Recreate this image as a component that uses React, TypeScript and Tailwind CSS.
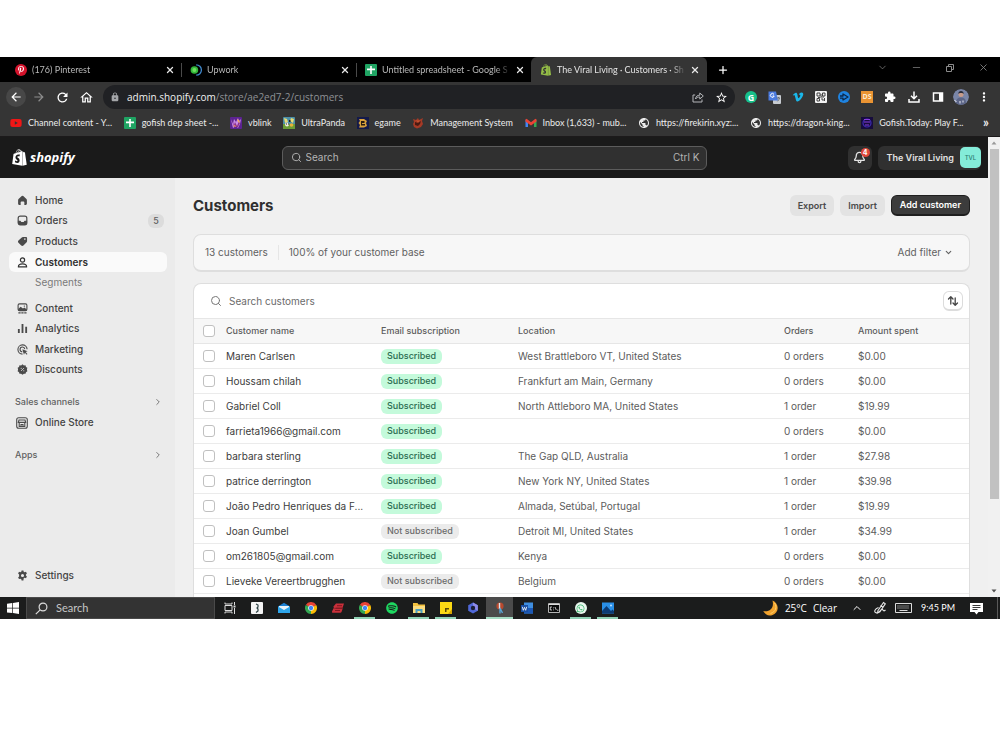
import React from "react";
import type { ReactNode } from "react";
import { FaShopify, FaPinterestP, FaVimeoV, FaSpotify, FaWhatsapp, FaYoutube } from "react-icons/fa";
import {
  MdArrowBack,
  MdArrowForward,
  MdRefresh,
  MdOutlineHome,
  MdLock,
  MdStarBorder,
  MdExtension,
  MdMoreVert,
  MdPublic,
} from "react-icons/md";
import { X, Plus, Minus, ChevronDown, ChevronRight, ChevronUp, Search } from "lucide-react";

/* ---------- small drawings ---------- */

function SheetsIcon() {
  return (
    <svg viewBox="0 0 12 12" className="size-3 shrink-0">
      <rect width="12" height="12" rx="1" fill="#1fa463" />
      <path d="M5.2 2h1.6v2.6H10v1.6H6.8V10H5.2V6.2H2V4.6h3.2z" fill="#fff" />
    </svg>
  );
}

function UpworkIcon() {
  return (
    <svg viewBox="0 0 12 12" className="size-3 shrink-0">
      <path d="M6.2.8a5.2 5.2 0 0 1 0 10.4" fill="none" stroke="#3f86c9" strokeWidth="1.3" />
      <circle cx="4.4" cy="6" r="3.800" fill="#33b83a" />
      <circle cx="4.4" cy="6" r="2" fill="#6fe060" />
    </svg>
  );
}

function ChromeIcon() {
  return (
    <svg viewBox="0 0 24 24" className="size-3 shrink-0">
      <path d="M12 12 1.6 6A12 12 0 0 1 22.4 6z" fill="#ea4335" />
      <path d="M12 12 22.4 6A12 12 0 0 1 12 24z" fill="#fbbc05" />
      <path d="M12 12v12A12 12 0 0 1 1.6 6z" fill="#34a853" />
      <circle cx="12" cy="12" r="5.6" fill="#fff" />
      <circle cx="12" cy="12" r="4.4" fill="#4285f4" />
    </svg>
  );
}

function VblinkIcon() {
  return (
    <svg viewBox="0 0 12 12" className="size-3 shrink-0">
      <rect width="12" height="12" rx="1" fill="#5c2391" />
      <path d="M1 2l2 5 1-5 2 3 2-4 1 3 2-2-1 5-2 4-2-2-3 2-1-4z" fill="#c98ae8" />
      <path d="M2 3l2 5 1-3 2 4 2-5 1 2-2 4H4z" fill="#8e2f86" />
      <path d="M7 2l2 1 1 3-2-1zM3 9l2-1 1 2z" fill="#f0a35c" />
    </svg>
  );
}

function PandaIcon() {
  return (
    <svg viewBox="0 0 12 12" className="size-3 shrink-0">
      <rect width="12" height="12" rx="1" fill="#4b8fa8" />
      <path d="M0 7h12v5H0z" fill="#6a9c35" />
      <path d="M1 1l3 1 1 3-3 1zM8 1l3 1-1 4-3-2z" fill="#e9dc72" />
      <circle cx="4" cy="7.500" r="2" fill="#f1efe2" />
      <circle cx="8.500" cy="8" r="1.800" fill="#e6b13c" />
      <path d="M3 6.500h1v1H3zM5 6.500h1v1H5zM6 3h1.500v2H6z" fill="#222" />
    </svg>
  );
}

function EgameIcon() {
  return (
    <svg viewBox="0 0 12 12" className="size-3 shrink-0">
      <rect width="12" height="12" fill="#141a4a" />
      <path d="M2 2h5l3 2-1 2 1 3-3 1.5H2L3 8 1.5 6 3 4z" fill="#d9a13c" />
      <path d="M4 4h3l1 1-1 1H5v1h3v1.5H4z" fill="#2a1d12" />
    </svg>
  );
}

function DragonIcon() {
  return (
    <svg viewBox="0 0 12 12" className="size-3 shrink-0">
      <path d="M1 2l3 1 2-2 1 2 4-2-1 3 1 3-2 3-4 1.5L2 10 1 7l1-2z" fill="#a63a26" />
      <path d="M3 5l3 1 3-2-1 3-2 2-3-1z" fill="#4a1a12" />
      <path d="M4 3l2 1 2-1-2 2z" fill="#d8703c" />
    </svg>
  );
}

function GmailIcon() {
  return (
    <svg viewBox="0 0 12 12" className="size-3 shrink-0">
      <path d="M.5 2.5V10H3V4.6z" fill="#4285f4" />
      <path d="M11.500 2.500V10H9V4.600z" fill="#34a853" />
      <path d="M.5 2.500 1.600 1.800 6 5.200l4.400-3.400 1.100.7v2L6 8.400.5 4.500z" fill="#ea4335" />
    </svg>
  );
}

function GofishIcon() {
  return (
    <svg viewBox="0 0 12 12" className="size-3 shrink-0">
      <rect width="12" height="12" fill="#170c3d" />
      <circle cx="6" cy="6" r="4" fill="none" stroke="#3d2bb0" strokeWidth="1.200" />
      <path d="M3 5h6M4 8h4M3 2.500h6" stroke="#8a3de0" strokeWidth="1" />
    </svg>
  );
}

function ShareIcon() {
  return (
    <svg viewBox="0 0 12 12" className="size-3" fill="none" stroke="#b4b6b9" strokeWidth="1">
      <path d="M3.200 4H1v7h9V8.500" />
      <path d="M3.500 8c.3-2.600 1.800-3.800 4.300-3.800V2L11.300 5 7.800 8V6c-2 0-3.300.5-4.300 2z" strokeLinejoin="round" />
    </svg>
  );
}

function TranslateIcon() {
  return (
    <svg viewBox="0 0 13 13" className="size-[13px]">
      <rect x="5" y="4" width="8" height="9" rx="1" fill="#c7cbd1" />
      <path d="M.5.5H8l2 9H.5z" fill="#4b7be0" />
      <path d="M6 3.400A1.900 1.900 0 1 0 6.200 5H4.600" fill="none" stroke="#fff" />
      <path d="M8.500 7h3.500M10.500 6v1M11.500 7c-.3 1.500-1 2.500-2 3.300" stroke="#59616b" strokeWidth=".8" fill="none" />
    </svg>
  );
}

function QrIcon() {
  return (
    <svg viewBox="0 0 12 12" className="size-3">
      <rect width="12" height="12" rx="1" fill="#f2f2f2" />
      <path d="M2 2h3v3H2zM7.500 2H10v3H7.500zM2 7.500h2.500V10H2z" fill="none" stroke="#333" strokeWidth=".9" />
      <path d="M6 3v3h3M6 8h2v2M9.500 7v3M5.500 6.500H3" stroke="#333" strokeWidth=".9" fill="none" />
    </svg>
  );
}

function PlayBadge() {
  return (
    <svg viewBox="0 0 12 12" className="size-3">
      <circle cx="6" cy="6" r="6" fill="#1f83e0" />
      <path d="M2 5h3V3l5 3-5 3V7.200H2" fill="none" stroke="#0c2748" strokeWidth="1.300" strokeLinejoin="round" />
    </svg>
  );
}

function NavIcon({ name }: { name: string }) {
  const c = "#4a4a4a";
  const art: Record<string, ReactNode> = {
    home: <path d="M5.200 1.200a1.200 1.200 0 0 1 1.600 0l3.500 3.200c.3.300.5.700.5 1.200v4c0 .8-.6 1.200-1.200 1.200H8V8a1 1 0 0 0-1-1H5a1 1 0 0 0-1 1v2.800H2.400c-.7 0-1.200-.5-1.200-1.200v-4c0-.5.2-.9.5-1.200z" fill={c} />,
    orders: (
      <>
        <rect x="1.300" y="1.300" width="9.400" height="9.400" rx="2.200" fill="none" stroke={c} strokeWidth="1.300" />
        <path d="M1 6.300h2.600c.5 0 .7 1.300 1.200 1.300h2.400c.5 0 .7-1.300 1.200-1.300H11v2.200c0 1.400-.9 2.300-2.300 2.300H3.300C1.900 10.800 1 9.900 1 8.500z" fill={c} />
      </>
    ),
    products: (
      <path
        fillRule="evenodd"
        d="M6.500 1h3.200c.8 0 1.300.5 1.300 1.300v3.200c0 .5-.2 1-.5 1.300l-3.500 3.500c-.7.7-1.700.7-2.400 0L1.600 7.300c-.7-.7-.7-1.700 0-2.400l3.600-3.400c.3-.3.800-.5 1.300-.5zM8.600 2.500a.9.900 0 1 0 0 1.800.9.900 0 0 0 0-1.800z"
        fill={c}
      />
    ),
    customers: (
      <g fill="none" stroke="#333" strokeWidth="1.300">
        <circle cx="6" cy="3.300" r="2.300" />
        <path d="M1.500 10.800c0-1.900 1.500-3.200 4.500-3.200s4.500 1.300 4.500 3.200z" strokeLinejoin="round" />
      </g>
    ),
    content: (
      <>
        <rect x="1.200" y="1" width="9.600" height="7.300" rx="1.500" fill="none" stroke={c} strokeWidth="1.200" />
        <path d="M1.300 6.500 4 4l2.500 2L8 5l2.700 2v1.500H1.300z" fill={c} />
        <circle cx="8" cy="3.400" r=".8" fill={c} />
        <path d="M1.500 10.800h9" stroke={c} strokeWidth="1.200" strokeDasharray="2.500 .7" />
      </>
    ),
    analytics: <path d="M1 6.500h2v4.500H1zM5 1h2v10H5zM9 4h2v7H9z" fill={c} />,
    marketing: (
      <g fill="none" stroke={c} strokeWidth="1.200">
        <path d="M11 5.800A5 5 0 1 0 6 11" />
        <path d="M8.500 5.600A2.600 2.600 0 1 0 5.800 8.500" />
        <path d="M5.800 5.800l5.800 2-2.200 1 2 2-.8.800-2-2-1 2z" fill={c} stroke="none" />
      </g>
    ),
    discounts: (
      <>
        <path d="M6 .4l1.500 1.100 1.800-.1.500 1.800 1.500 1L10.800 6l.5 1.900-1.500 1-.5 1.800-1.800-.1L6 11.600l-1.500-1-1.800.1-.5-1.800-1.500-1L1.200 6 .7 4.200l1.500-1 .5-1.800 1.800.1z" fill={c} />
        <path d="M4.400 7.600l3.200-3.200" stroke="#eee" strokeWidth=".8" />
        <circle cx="4.600" cy="4.700" r=".6" fill="#eee" />
        <circle cx="7.400" cy="7.300" r=".6" fill="#eee" />
      </>
    ),
    store: (
      <g fill="none" stroke={c} strokeWidth="1.100">
        <rect x=".7" y=".7" width="10.600" height="10.600" rx="2" />
        <path d="M3 3h6l.7 2.400H2.300zM3.200 6v3.500h5.600V6M5 9.500V7.500h2v2" />
      </g>
    ),
    settings: (
      <path
        fillRule="evenodd"
        d="M5 .5h2l.3 1.500 1 .5 1.500-.5 1 1.800-1.100 1v1.300l1.100 1-1 1.800-1.500-.4-1 .5L7 11.500H5L4.700 10l-1-.5-1.500.4-1-1.800 1.100-1V5.800v-1l-1.100-1 1-1.800 1.500.5 1-.5zM6 4.300a1.700 1.700 0 1 0 0 3.400 1.700 1.700 0 0 0 0-3.400z"
        fill={c}
      />
    ),
  };
  return (
    <svg viewBox="0 0 12 12" className={name === "store" ? "size-3 shrink-0" : "size-[11px] shrink-0"}>
      {art[name]}
    </svg>
  );
}

/* ---------- browser chrome ---------- */

function Tab({ icon, title, active }: { icon: ReactNode; title: string; active?: boolean }) {
  return (
    <div
      className={
        active
          ? "flex h-full w-[176px] items-center rounded-t-md bg-[#353535] pr-[7px] pl-[9px] text-[#e4e4e4]"
          : "flex h-full w-[175px] items-center pr-[6px] pl-[9px] text-[#b9b9b9]"
      }
    >
      {icon}
      <span className="ml-[5px] min-w-0 flex-1 overflow-hidden whitespace-nowrap [mask-image:linear-gradient(to_right,#000_88%,transparent)]">
        {title}
      </span>
      <button aria-label="Close tab" className="ml-1 grid size-[10px] place-items-center text-[#e8e8e8]">
        <X className="size-[10px]" strokeWidth={3} />
      </button>
    </div>
  );
}

function TabStrip() {
  return (
    <div className="flex h-[25px] items-center bg-black pl-[6px] font-[Lato,sans-serif] text-[9px]">
      <Tab
        icon={
          <span className="grid size-3 shrink-0 place-items-center rounded-full bg-[#d3122b]">
            <FaPinterestP className="size-2 text-white" />
          </span>
        }
        title="(176) Pinterest"
      />
      <div className="-mr-px h-[14px] w-px bg-[#4a4a4a]" />
      <Tab icon={<UpworkIcon />} title="Upwork" />
      <div className="-mr-px h-[14px] w-px bg-[#4a4a4a]" />
      <Tab icon={<SheetsIcon />} title="Untitled spreadsheet - Google S" />
      <Tab active icon={<FaShopify className="size-3 shrink-0 text-[#95bf47]" />} title="The Viral Living · Customers · Sh" />
      <button aria-label="New tab" className="ml-[10px] text-white">
        <Plus className="size-3" strokeWidth={2.5} />
      </button>
      <div className="ml-auto flex items-center gap-[23px] pr-[11px] pb-1 text-[#8c8c8c]">
        <button aria-label="Search tabs"><ChevronDown className="size-[11px]" strokeWidth={1.5} /></button>
        <button aria-label="Minimize"><Minus className="size-[11px]" strokeWidth={1.5} /></button>
        <button aria-label="Restore">
          <svg viewBox="0 0 10 10" className="size-[10px]" fill="none" stroke="currentColor">
            <path d="M1.500 3.500h5v5h-5zM3.500 3.500v-2h5v5h-2" />
          </svg>
        </button>
        <button aria-label="Close"><X className="size-[11px]" strokeWidth={1.8} /></button>
      </div>
    </div>
  );
}

function Toolbar() {
  return (
    <div className="flex h-[30px] items-center bg-[#353535] pr-[10px] pl-[6px] text-white">
      <button aria-label="Back" className="grid size-5 place-items-center rounded-full bg-[#474747]">
        <MdArrowBack className="size-[14px]" />
      </button>
      <button aria-label="Forward" className="ml-[6px] text-[#8d8d8d]"><MdArrowForward className="size-[14px]" /></button>
      <button aria-label="Reload" className="ml-[9px]"><MdRefresh className="size-[15px]" /></button>
      <button aria-label="Home" className="ml-[9px]"><MdOutlineHome className="size-[15px]" /></button>
      <div className="ml-[9px] flex h-6 min-w-0 flex-1 items-center rounded-full bg-[#202124] pr-[7px] pl-[7px]">
        <MdLock className="size-[10px] shrink-0 text-[#a4a6a9]" />
        <a href="#store" className="ml-[7px] flex-1 text-[10px] text-[#8f9194]">
          <span className="text-[#f1f1f1]">admin.shopify.com</span>/store/ae2ed7-2/customers
        </a>
        <button aria-label="Share"><ShareIcon /></button>
        <button aria-label="Bookmark" className="ml-[11px]"><MdStarBorder className="size-[13px]" /></button>
      </div>
      <div className="ml-[10px] flex items-center gap-[11px]">
        <span className="grid size-3 place-items-center rounded-full bg-[#17c08a] text-[9px] font-bold">G</span>
        <TranslateIcon />
        <FaVimeoV className="size-3 text-[#1ab7ea]" />
        <QrIcon />
        <PlayBadge />
        <span className="grid size-3 place-items-center bg-[#ea9433] text-[7px] font-bold text-[#fbe8cf]">DS</span>
        <MdExtension className="size-3" />
        <svg viewBox="0 0 12 12" className="mx-px size-3" fill="none" stroke="#fff" strokeWidth="1.500">
          <path d="M6 .5v7M3 4.800l3 3 3-3M1 8v3h10V8" />
        </svg>
        <svg viewBox="0 0 12 12" className="size-3">
          <path d="M1.500 2h9v8h-9z" fill="none" stroke="#fff" strokeWidth="1.500" />
          <path d="M7 2h4v8H7z" fill="#fff" />
        </svg>
        <svg viewBox="0 0 16 16" className="-mx-[2px] size-4 rounded-full">
          <circle cx="8" cy="8" r="8" fill="#7a86a8" />
          <circle cx="8" cy="5.500" r="2.500" fill="#c79c8b" />
          <path d="M5.200 5c0-4 5.600-4 5.600 0-1-1.200-4.600-1.200-5.600 0z" fill="#2b2d3a" />
          <path d="M3 14c0-4 2-5.500 5-5.500s5 1.500 5 5.500c-3 2.500-7 2.500-10 0z" fill="#5d6688" />
          <path d="M1.500 11.500l2 1M7 12v2.500M10 11.500v2" stroke="#e7e9f2" fill="none" />
        </svg>
        <button aria-label="Menu"><MdMoreVert className="-mx-[1px] size-[14px]" /></button>
      </div>
    </div>
  );
}

const bookmarks: { icon: ReactNode; label: string }[] = [
  { icon: <FaYoutube className="size-3 shrink-0 text-[#f01616]" />, label: "Channel content - Y..." },
  { icon: <SheetsIcon />, label: "gofish dep sheet -..." },
  { icon: <VblinkIcon />, label: "vblink" },
  { icon: <PandaIcon />, label: "UltraPanda" },
  { icon: <EgameIcon />, label: "egame" },
  { icon: <DragonIcon />, label: "Management System" },
  { icon: <GmailIcon />, label: "Inbox (1,633) - mub..." },
  { icon: <MdPublic className="size-3 shrink-0" />, label: "https://firekirin.xyz:..." },
  { icon: <MdPublic className="size-3 shrink-0" />, label: "https://dragon-king..." },
  { icon: <GofishIcon />, label: "Gofish.Today: Play F..." },
];

function Bookmarks() {
  return (
    <div className="flex h-[25px] items-center justify-between border-b border-[#1c1a1b] bg-[#353535] pr-[11px] pb-[3px] pl-[10px] font-[Lato,sans-serif] text-[9px] text-[#ececec]">
      {bookmarks.map((b) => (
        <a key={b.label} href="#bookmark" className="flex items-center gap-[6px] whitespace-nowrap">
          {b.icon}
          {b.label}
        </a>
      ))}
      <button aria-label="More bookmarks" className="ml-2 text-[13px] leading-none font-bold">»</button>
    </div>
  );
}

/* ---------- store admin ---------- */

function AdminHeader() {
  return (
    <header className="grid h-[41px] shrink-0 grid-cols-[1fr_425px_1fr] items-center bg-[#1a1a1a] px-[7px] text-[#e3e3e3]">
      <a href="#home" aria-label="Shopify" className="flex items-center gap-[2px] pl-1 text-white">
        <FaShopify className="size-[17px]" />
        <span className="font-['Open_Sans',sans-serif] text-[13px] leading-none font-bold italic">shopify</span>
      </a>
      <label className="flex h-6 items-center rounded-md border border-[#5c5c5c] bg-[#303030] px-[6px] text-[10px] text-[#b5b5b5]">
        <Search className="ml-[2px] size-[11px]" strokeWidth={2} />
        <input aria-label="Search" placeholder="Search" className="ml-[4px] min-w-0 flex-1 bg-transparent outline-none placeholder:text-[#b5b5b5]" />
        <span>Ctrl K</span>
      </label>
      <div className="flex items-center justify-end gap-[6px]">
        <button aria-label="Notifications" className="relative grid size-6 place-items-center rounded-md bg-[#303030]">
          <svg viewBox="0 0 12 12" className="size-[13px]" fill="none" stroke="#e3e3e3" strokeWidth="1.200">
            <path d="M6 1.200c-2 0-3 1.500-3 3.300 0 1.700-.7 2.400-1.400 3.300-.3.500 0 .9.500.9h7.800c.5 0 .8-.4.5-.9C9.700 6.900 9 6.200 9 4.500 9 2.700 8 1.200 6 1.200z" />
            <path d="M4.700 9c0 2.400 2.600 2.400 2.600 0" />
          </svg>
          <span className="absolute top-[2px] right-[2px] grid size-[9px] place-items-center rounded-full bg-[#e0483a] text-[7px] leading-none font-bold text-white">4</span>
        </button>
        <button className="flex h-6 items-center gap-[6px] rounded-md bg-[#303030] pl-[9px] text-[9px] font-semibold">
          The Viral Living
          <span className="grid size-[21px] place-items-center rounded-[5px] bg-[#84ecd9] text-[6px] font-medium text-[#2c7d72]">TVL</span>
        </button>
      </div>
    </header>
  );
}

function NavItem({ icon, label, active, badge }: { icon?: string; label: string; active?: boolean; badge?: string }) {
  return (
    <a
      href={"#" + label.toLowerCase().replace(" ", "-")}
      className={
        active
          ? "flex flex-1 items-center gap-[7px] rounded-md bg-[#fafafa] px-[7px] font-semibold text-[#303030]"
          : icon
            ? "flex flex-1 items-center gap-[7px] px-[7px] font-medium text-[#444]"
            : "flex flex-1 items-center pl-[26px] text-[#7a7a7a]"
      }
    >
      {icon && <span className="grid w-3 place-items-center"><NavIcon name={icon} /></span>}
      {label}
      {badge && (
        <span className="-mr-1 ml-auto grid h-[14px] w-4 place-items-center rounded-md bg-[#dcdcdc] text-[9px] text-[#616161]">
          {badge}
        </span>
      )}
    </a>
  );
}

function SectionButton({ label }: { label: string }) {
  return (
    <button className="flex h-5 w-full items-center justify-between pr-1 pl-[6px] text-[9px] font-medium text-[#616161]">
      {label}
      <ChevronRight className="size-[10px]" strokeWidth={2} />
    </button>
  );
}

function Sidebar() {
  return (
    <nav className="flex w-[175px] shrink-0 flex-col bg-[#ebebeb] pt-3 pr-2 pb-3 pl-[9px] text-[10px]">
      <div className="flex h-[103px] flex-col">
        <NavItem icon="home" label="Home" />
        <NavItem icon="orders" label="Orders" badge="5" />
        <NavItem icon="products" label="Products" />
        <NavItem icon="customers" label="Customers" active />
        <NavItem label="Segments" />
      </div>
      <div className="mt-[5px] flex h-[82px] flex-col">
        <NavItem icon="content" label="Content" />
        <NavItem icon="analytics" label="Analytics" />
        <NavItem icon="marketing" label="Marketing" />
        <NavItem icon="discounts" label="Discounts" />
      </div>
      <div className="mt-3 flex h-[41px] flex-col">
        <SectionButton label="Sales channels" />
        <NavItem icon="store" label="Online Store" />
      </div>
      <div className="mt-3">
        <SectionButton label="Apps" />
      </div>
      <div className="mt-auto flex h-5">
        <NavItem icon="settings" label="Settings" />
      </div>
    </nav>
  );
}

type Customer = { name: string; subscribed: boolean; location: string; orders: string; spent: string };

const customers: Customer[] = [
  { name: "Maren Carlsen", subscribed: true, location: "West Brattleboro VT, United States", orders: "0 orders", spent: "$0.00" },
  { name: "Houssam chilah", subscribed: true, location: "Frankfurt am Main, Germany", orders: "0 orders", spent: "$0.00" },
  { name: "Gabriel Coll", subscribed: true, location: "North Attleboro MA, United States", orders: "1 order", spent: "$19.99" },
  { name: "farrieta1966@gmail.com", subscribed: true, location: "", orders: "0 orders", spent: "$0.00" },
  { name: "barbara sterling", subscribed: true, location: "The Gap QLD, Australia", orders: "1 order", spent: "$27.98" },
  { name: "patrice derrington", subscribed: true, location: "New York NY, United States", orders: "1 order", spent: "$39.98" },
  { name: "João Pedro Henriques da F...", subscribed: true, location: "Almada, Setúbal, Portugal", orders: "1 order", spent: "$19.99" },
  { name: "Joan Gumbel", subscribed: false, location: "Detroit MI, United States", orders: "1 order", spent: "$34.99" },
  { name: "om261805@gmail.com", subscribed: true, location: "Kenya", orders: "0 orders", spent: "$0.00" },
  { name: "Lieveke Vereertbrugghen", subscribed: false, location: "Belgium", orders: "0 orders", spent: "$0.00" },
];

function Tick({ label }: { label: string }) {
  return (
    <input
      type="checkbox"
      aria-label={label}
      className="ml-[9px] block size-3 appearance-none rounded-[3px] border border-[#c0c0c0] bg-white checked:bg-[#303030]"
    />
  );
}

function CustomerTable() {
  return (
    <table className="w-full table-fixed border-collapse text-left text-[9px] text-[#5c5c5c]">
      <colgroup>
        <col className="w-8" />
        <col className="w-[155px]" />
        <col className="w-[137px]" />
        <col />
        <col className="w-[74px]" />
        <col className="w-[111px]" />
      </colgroup>
      <thead>
        <tr className="h-[25px] border-y border-[#e6e6e6] bg-[#f7f7f7]">
          <th><Tick label="Select all customers" /></th>
          <th className="font-medium">Customer name</th>
          <th className="font-medium">Email subscription</th>
          <th className="font-medium">Location</th>
          <th className="font-medium">Orders</th>
          <th className="font-medium">Amount spent</th>
        </tr>
      </thead>
      <tbody className="text-[10px]">
        {customers.map((c) => (
          <tr key={c.name} className="h-[25px] border-b border-[#ebebeb]">
            <td><Tick label={"Select " + c.name} /></td>
            <td className="whitespace-nowrap text-[#3c3c3c]">{c.name}</td>
            <td>
              <span
                className={
                  c.subscribed
                    ? "flex h-[15px] w-fit items-center rounded-md bg-[#c4fadb] px-[6px] text-[9px] font-medium text-[#2a6b50]"
                    : "flex h-[15px] w-fit items-center rounded-md bg-[#ebebeb] px-[6px] text-[9px] font-medium text-[#6b6b6b]"
                }
              >
                {c.subscribed ? "Subscribed" : "Not subscribed"}
              </span>
            </td>
            <td>{c.location}</td>
            <td>{c.orders}</td>
            <td>{c.spent}</td>
          </tr>
        ))}
      </tbody>
    </table>
  );
}

function CustomersPage() {
  return (
    <main className="flex min-w-0 flex-1 flex-col overflow-hidden bg-[#f0f0f0] px-[18px] pt-[17px]">
      <div className="flex h-[21px] shrink-0 items-center gap-[6px] text-[9px] font-semibold text-[#4a4a4a]">
        <h1 className="mr-auto pt-[2px] text-[15px] font-bold text-[#2f2f2f]">Customers</h1>
        <button className="h-[21px] rounded-md bg-[#e3e3e3] px-2">Export</button>
        <button className="h-[21px] rounded-md bg-[#e3e3e3] px-2">Import</button>
        <button className="h-[21px] rounded-md border border-b-2 border-[#1f1f1f] bg-[#3c3c3c] px-2 text-white">
          Add customer
        </button>
      </div>
      <section className="mt-[18px] flex h-[38px] shrink-0 items-center rounded-lg border border-b-2 border-[#dedede] bg-[#f7f7f7] px-[11px] text-[10px] text-[#616161]">
        <span>13 customers</span>
        <span className="ml-[10px] border-l border-[#e6e6e6] pl-[10px]">100% of your customer base</span>
        <button className="mr-[5px] ml-auto flex items-center gap-[3px]">
          Add filter
          <ChevronDown className="size-[9px]" strokeWidth={3} />
        </button>
      </section>
      <section className="mt-[11px] flex-1 rounded-t-lg border border-b-0 border-[#dedede] bg-white">
        <div className="flex h-[34px] items-center pr-[6px] pl-[16px] text-[10px]">
          <Search className="size-3 text-[#777]" strokeWidth={2} />
          <input
            aria-label="Search customers"
            placeholder="Search customers"
            className="ml-[7px] min-w-0 flex-1 bg-transparent outline-none placeholder:text-[#6b6b6b]"
          />
          <button aria-label="Sort" className="grid size-5 place-items-center rounded-md border border-b-2 border-[#dcdcdc] bg-white">
            <svg viewBox="0 0 12 12" className="size-3" fill="none" stroke="#444" strokeWidth="1.300" strokeLinecap="round" strokeLinejoin="round">
              <path d="M3.800 9V2M1.500 4 3.800 1.700 6 4M8.200 3v7M6 8l2.200 2.300L10.500 8" />
            </svg>
          </button>
        </div>
        <CustomerTable />
      </section>
    </main>
  );
}

function ScrollTrack() {
  return (
    <div className="flex w-3 shrink-0 flex-col items-center bg-[#f1f1f1]">
      <svg viewBox="0 0 12 12" className="size-3"><path d="M3.500 7.500h5L6 4.500z" fill="#9a9a9a" /></svg>
      <div className="h-[350px] w-[9px] bg-[#c1c1c1]" />
      <svg viewBox="0 0 12 12" className="mt-auto size-3"><path d="M3.500 4.500h5L6 7.500z" fill="#505050" /></svg>
    </div>
  );
}

/* ---------- desktop task bar ---------- */

const apps: { name: string; icon: ReactNode; state?: "open" | "current" }[] = [
  {
    name: "Task view",
    icon: (
      <svg viewBox="0 0 12 12" className="size-3" fill="none" stroke="#ddd">
        <path d="M1 3.500h7v5H1zM1 .5v1.500h7V.5M1 11.500V10h7v1.500M10.500 0v3M10.500 6v6" />
        <path d="M9.500 4.500h2" strokeWidth="2" />
      </svg>
    ),
  },
  {
    name: "Notes editor",
    icon: (
      <svg viewBox="0 0 12 12" className="size-3">
        <rect width="12" height="12" rx="1" fill="#f4f4f4" />
        <path d="M5 2l2 1v2L6 6l1 1v2L5 10.500" stroke="#2b4044" strokeWidth="1.200" fill="none" />
      </svg>
    ),
  },
  {
    name: "Mail",
    icon: (
      <svg viewBox="0 0 12 12" className="size-3">
        <path d="M0 4.500 6 .8l6 3.700V11H0z" fill="#1b7fd0" />
        <path d="M1 4h10v3L6 9 1 7z" fill="#e9f4fb" />
        <path d="M0 4.500 6 8l6-3.500V11H0z" fill="#2ea5ea" />
      </svg>
    ),
  },
  { name: "Chrome beta", icon: <ChromeIcon /> },
  {
    name: "Layers",
    icon: (
      <svg viewBox="0 0 12 12" className="size-3">
        <path d="M4 1.500h8L10.500 6H2.500c-1 0-1.300-.7-1-1.500zM1.500 6.200h9.300L9.500 10c-.2.500-.5.800-1 .8H1c-.8 0-1.200-.6-1-1.300z" fill="#c9303b" />
        <path d="M3.500 6.100h7M5 3.700h5M3 8.500h5" stroke="#6e1018" strokeWidth=".8" />
      </svg>
    ),
  },
  { name: "Chrome", icon: <ChromeIcon />, state: "open" },
  { name: "Spotify", icon: <FaSpotify className="size-3 text-[#1ed760]" /> },
  {
    name: "File explorer",
    icon: (
      <svg viewBox="0 0 12 12" className="size-3">
        <path d="M0 1h4.500l1 1.500H12V11H0z" fill="#f3c13f" />
        <path d="M0 4h12v7H0z" fill="#fbdc80" />
        <path d="M2.500 7h7v4h-2V9h-3v2h-2z" fill="#4a9fc4" />
      </svg>
    ),
    state: "open",
  },
  {
    name: "Sticky notes",
    icon: (
      <svg viewBox="0 0 12 12" className="size-3">
        <path d="M0 0h12v12H0z" fill="#fbd914" />
        <path d="M5 6h4v1.500H6.500V10H5z" fill="#5b4b08" />
        <path d="M12 7v5H8z" fill="#d7a400" />
      </svg>
    ),
    state: "open",
  },
  {
    name: "Studio",
    icon: (
      <svg viewBox="0 0 12 12" className="size-3">
        <path d="M6 .5 10.800 3.200v5.600L6 11.500 1.200 8.800V3.200z" fill="#5068d8" />
        <path d="M6 .5 10.800 3.200v5.600L6 6z" fill="#8f8bea" />
        <circle cx="6" cy="6" r="2.200" fill="#1c1f38" />
      </svg>
    ),
  },
  {
    name: "Snipping tool",
    icon: (
      <svg viewBox="0 0 12 12" className="size-3">
        <circle cx="6" cy="4" r="3.600" fill="#b8492e" />
        <path d="M5.500 1v6" stroke="#dbe7ee" strokeWidth="1.400" />
        <path d="M6 6l2.500 5M6 6v5.500" stroke="#58a4d4" strokeWidth="1.400" />
      </svg>
    ),
    state: "current",
  },
  {
    name: "Word",
    icon: (
      <svg viewBox="0 0 12 12" className="size-3">
        <path d="M3 .5h9v11H3z" fill="#3f8ee0" />
        <path d="M3 6h9v5.500H3z" fill="#1c58b5" />
        <path d="M0 3h7v7H0z" fill="#1a4fa3" />
        <path d="M1.300 4.800l1 3.500 1.200-3 1.200 3 1-3.500" stroke="#fff" strokeWidth=".8" fill="none" />
      </svg>
    ),
  },
  {
    name: "Command prompt",
    icon: (
      <svg viewBox="0 0 12 12" className="size-3">
        <path d="M.5 1.500h11v9H.5z" fill="#0a0a0a" stroke="#b5b5b5" />
        <path d="M.5 2.500h11" stroke="#ddd" />
        <path d="M4 5H2.300v3H4M5.500 5.500v.8M5.500 7.500v.8M7 5l1.300 3M9 8.200h1.500" stroke="#eee" strokeWidth=".8" fill="none" />
      </svg>
    ),
  },
  {
    name: "WhatsApp",
    icon: (
      <span className="grid size-3 place-items-center rounded-full bg-[#eaf7ef]">
        <FaWhatsapp className="size-[9px] text-[#2fb366]" />
      </span>
    ),
    state: "open",
  },
  {
    name: "Photos",
    icon: (
      <svg viewBox="0 0 12 12" className="size-3">
        <path d="M0 .5h12v11H0z" fill="#2a8fe6" />
        <path d="M0 9l4.500-5L9 9l1.500-1.500L12 9v2.500H0z" fill="#0c3b74" />
        <circle cx="9" cy="3.500" r="1" fill="#bfe2ff" />
      </svg>
    ),
    state: "open",
  },
];

function TaskBar() {
  return (
    <footer className="flex h-[22px] shrink-0 items-stretch bg-[#1b1c1c] text-white">
      <button aria-label="Start" className="grid w-[26px] place-items-center">
        <svg viewBox="0 0 12 12" className="size-3" fill="#fff">
          <path d="M0 1.700 5.300 1v4.700H0zM6 .9 12 0v5.700H6zM0 6.400h5.300v4.700L0 10.400zM6 6.400h6V12l-6-.9z" />
        </svg>
      </button>
      <label className="mr-px flex w-[189px] items-center border border-[#4a4a4a] bg-[#333] pl-2">
        <svg viewBox="0 0 13 13" className="size-[13px] shrink-0" fill="none" stroke="#dcdcdc" strokeWidth="1.200">
          <circle cx="8" cy="5" r="3.900" />
          <path d="M5.200 7.800.8 12.200" />
        </svg>
        <input aria-label="Search Windows" placeholder="Search" className="ml-2 w-full bg-transparent font-[Lato,sans-serif] text-[11px] outline-none placeholder:text-[#c6c6c6]" />
      </label>
      {apps.map((a) => (
        <button
          key={a.name}
          aria-label={a.name}
          className={
            a.state === "current"
              ? "grid w-[27px] place-items-center border-b-2 border-[#a5dcc4] bg-[#4b4b4b] pt-[2px]"
              : a.state === "open"
                ? "mx-[3px] grid w-[21px] place-items-center border-b-2 border-[#8fd0b4] pt-[2px]"
                : "grid w-[27px] place-items-center"
          }
        >
          {a.icon}
        </button>
      ))}
      <div className="ml-auto flex items-center pr-[2px] text-[10px]">
        <svg viewBox="0 0 16 16" className="size-4">
          <path d="M9.500.5c7 3 7 12.500-.5 14.800-4 1-7-1-8.800-4.200C6.500 12.500 11.500 8 9.500.5z" fill="#f2a32e" />
          <path d="M11.500 3c3 4 1 9-4 10.500" fill="none" stroke="#ffd06a" />
        </svg>
        <span className="ml-[6px]">25°C</span>
        <span className="ml-[6px]">Clear</span>
        <button aria-label="Show hidden icons" className="ml-[14px]"><ChevronUp className="size-3" strokeWidth={2} /></button>
        <svg viewBox="0 0 14 14" className="ml-[10px] size-[14px]" fill="none" stroke="#e8e8e8" strokeWidth="1.100">
          <path d="M5 9.500 10.500 1.500l1.800 1.300-5.400 8L4.500 12zM5.500 6.500C2 7.500.5 11 3 11.800c3 .7 3.500-2 5.500-3.300 2-1 1 3 4 .5M7.500 4.500l3 2" />
        </svg>
        <svg viewBox="0 0 17 12" className="ml-[8px] h-3 w-[17px]" fill="none" stroke="#dcdcdc">
          <path d="M.5 1.500h16v9H.5z" />
          <path d="M2.500 4h12M2.500 6h12" strokeDasharray="1 1" />
          <path d="M4.500 8.500h8" />
        </svg>
        <span className="ml-[9px] font-[Lato,sans-serif] text-[9px]">9:45 PM</span>
        <button aria-label="Action center" className="ml-[15px]">
          <svg viewBox="0 0 13 13" className="size-[13px]">
            <path d="M0 1h13v9H8.500L6.500 12.500 4.500 10H0z" fill="#fff" />
            <path d="M2.500 3.500h8M2.500 5.500h8M2.500 7.500h5" stroke="#222" strokeWidth=".9" />
          </svg>
        </button>
        <span className="ml-[14px] h-[22px] w-px bg-[#5a5a5a]" />
      </div>
    </footer>
  );
}

export default function App() {
  return (
    <div className="flex h-screen flex-col bg-white pt-[57px] pb-[131px] font-['Open_Sans',sans-serif]">
      <TabStrip />
      <Toolbar />
      <Bookmarks />
      <div className="flex min-h-0 flex-1 font-[Inter,sans-serif]">
        <div className="flex min-w-0 flex-1 flex-col">
          <AdminHeader />
          <div className="flex min-h-0 flex-1">
            <Sidebar />
            <CustomersPage />
          </div>
        </div>
        <ScrollTrack />
      </div>
      <TaskBar />
    </div>
  );
}
